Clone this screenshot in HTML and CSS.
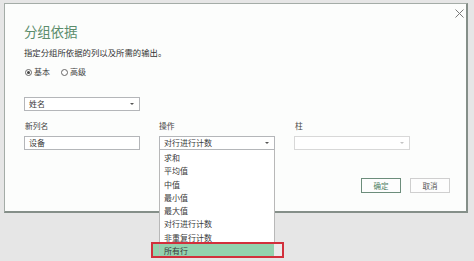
FILE: index.html
```html
<!DOCTYPE html>
<html lang="zh-CN">
  <head>
    <meta charset="UTF-8" />
    <meta name="viewport" content="width=device-width, initial-scale=1.0" />
    <title>分组依据</title>
    <link rel="stylesheet" href="styles.css">
  </head>
  <body>
    <div class="dialog">
      <button class="close" aria-label="关闭">
        <svg width="9" height="9" viewBox="0 0 9 9">
          <path d="M0.5 0.5 L8.5 8.5 M8.5 0.5 L0.5 8.5" stroke="#7a7a7a" stroke-width="1" fill="none" />
        </svg>
      </button>
      <h1 class="title">分组依据</h1>
      <p class="desc">指定分组所依据的列以及所需的输出。</p>
      <div class="mode">
        <label class="radio"><span class="dot checked"></span>基本</label>
        <label class="radio"><span class="dot"></span>高级</label>
      </div>
      <div class="select group-by">
        <span>姓名</span><span class="arrow"></span>
      </div>
      <div class="fields">
        <div class="field">
          <div class="label">新列名</div>
          <div class="input">设备</div>
        </div>
        <div class="field op">
          <div class="label">操作</div>
          <div class="select">
            <span>对行进行计数</span><span class="arrow"></span>
          </div>
          <ul class="menu">
            <li>求和</li>
            <li>平均值</li>
            <li>中值</li>
            <li>最小值</li>
            <li>最大值</li>
            <li>对行进行计数</li>
            <li>非重复行计数</li>
            <li class="active">所有行</li>
          </ul>
          <div class="mark"></div>
        </div>
        <div class="field">
          <div class="label">柱</div>
          <div class="select disabled">
            <span></span><span class="arrow"></span>
          </div>
        </div>
      </div>
      <div class="actions">
        <button class="btn primary">确定</button>
        <button class="btn">取消</button>
      </div>
    </div>
  </body>
</html>
```

FILE: styles.css
```css
body {
  margin: 0;
  padding: 0;
  background: #e6e6e6;
  font-family: "Noto Sans CJK SC", "Noto Sans", sans-serif;
  color: #3a3a3a;
  height: 261px;
  overflow: hidden;
}
.dialog {
  position: relative;
  box-sizing: border-box;
  margin: 3px 0 0 4px;
  width: 464px;
  height: 210px;
  background: #fcfdfc;
  border: 1px solid #a4aca7;
  border-right: 2px solid #858f89;
  border-bottom: 2px solid #858f89;
  padding: 20px 0 0 19px;
}
.close {
  position: absolute;
  top: 5px;
  right: 2px;
  padding: 0;
  border: none;
  background: none;
  width: 9px;
  height: 9px;
  display: block;
}
.close svg {
  display: block;
}
.title {
  margin: 0;
  font-size: 13.5px;
  line-height: 14px;
  font-weight: normal;
  color: #5b8d6c;
  letter-spacing: -0.2px;
}
.desc {
  margin: 9px 0 0;
  font-size: 8.4px;
  line-height: 10px;
  color: #333;
}
.mode {
  margin-top: 10px;
  height: 10px;
  display: flex;
  align-items: center;
  gap: 11px;
  padding-left: 1px;
}
.radio {
  display: flex;
  align-items: center;
  gap: 2px;
  font-size: 8px;
  line-height: 10px;
  color: #444;
}
.dot {
  box-sizing: border-box;
  width: 7px;
  height: 7px;
  border: 1px solid #666;
  border-radius: 50%;
  background: #fff;
  display: flex;
  align-items: center;
  justify-content: center;
}
.dot.checked::after {
  content: "";
  width: 3px;
  height: 3px;
  border-radius: 50%;
  background: #444;
}
.select,
.input {
  box-sizing: border-box;
  height: 14px;
  width: 116px;
  border: 1px solid #b4b6b9;
  background: #fff;
  display: flex;
  align-items: center;
  justify-content: space-between;
  padding: 0 5px 0 4px;
  font-size: 8px;
  line-height: 10px;
  color: #3a3a3a;
}
.arrow {
  width: 0;
  height: 0;
  border-left: 2px solid transparent;
  border-right: 2px solid transparent;
  border-top: 2px solid #555;
}
.group-by {
  margin-top: 20px;
}
.select.disabled {
  border-color: #d8d8d8;
}
.select.disabled .arrow {
  border-top-color: #c4c4c4;
}
.fields {
  margin-top: 10px;
  display: grid;
  grid-template-columns: 116px 116px 116px;
  column-gap: 19px;
}
.field {
  position: relative;
}
.label {
  font-size: 7.8px;
  line-height: 10px;
  color: #444;
  margin-bottom: 5px;
  padding-left: 1px;
}
.op .label {
  padding-left: 0;
}
.menu {
  position: absolute;
  z-index: 2;
  top: 29px;
  left: 0;
  box-sizing: border-box;
  width: 116px;
  margin: 0;
  padding: 1px 0 0;
  list-style: none;
  background: #fff;
  border: 1px solid #b8b8b8;
  border-top: none;
}
.menu li {
  height: 13.3px;
  line-height: 13.3px;
  font-size: 8px;
  padding-left: 4px;
  color: #3a3a3a;
}
.menu li.active {
  background: #93d2ae;
}
.mark {
  position: absolute;
  z-index: 3;
  top: 121px;
  left: -8px;
  box-sizing: border-box;
  width: 133px;
  height: 16px;
  border: 2px solid #d2303c;
  background: linear-gradient(to right, #93d2ae 0 6px, transparent 6px 121px, #ebebeb 121px);
}
.actions {
  margin-top: 28px;
  display: flex;
  gap: 9px;
  padding-left: 337px;
}
.btn {
  box-sizing: border-box;
  width: 40px;
  height: 15px;
  padding: 0;
  border: 1px solid #cfcfcf;
  background: #fdfdfd;
  font-family: inherit;
  font-size: 7.5px;
  line-height: 10px;
  color: #555;
}
.btn.primary {
  border: 1px solid #6c8d7b;
  color: #4f7d63;
}
```
